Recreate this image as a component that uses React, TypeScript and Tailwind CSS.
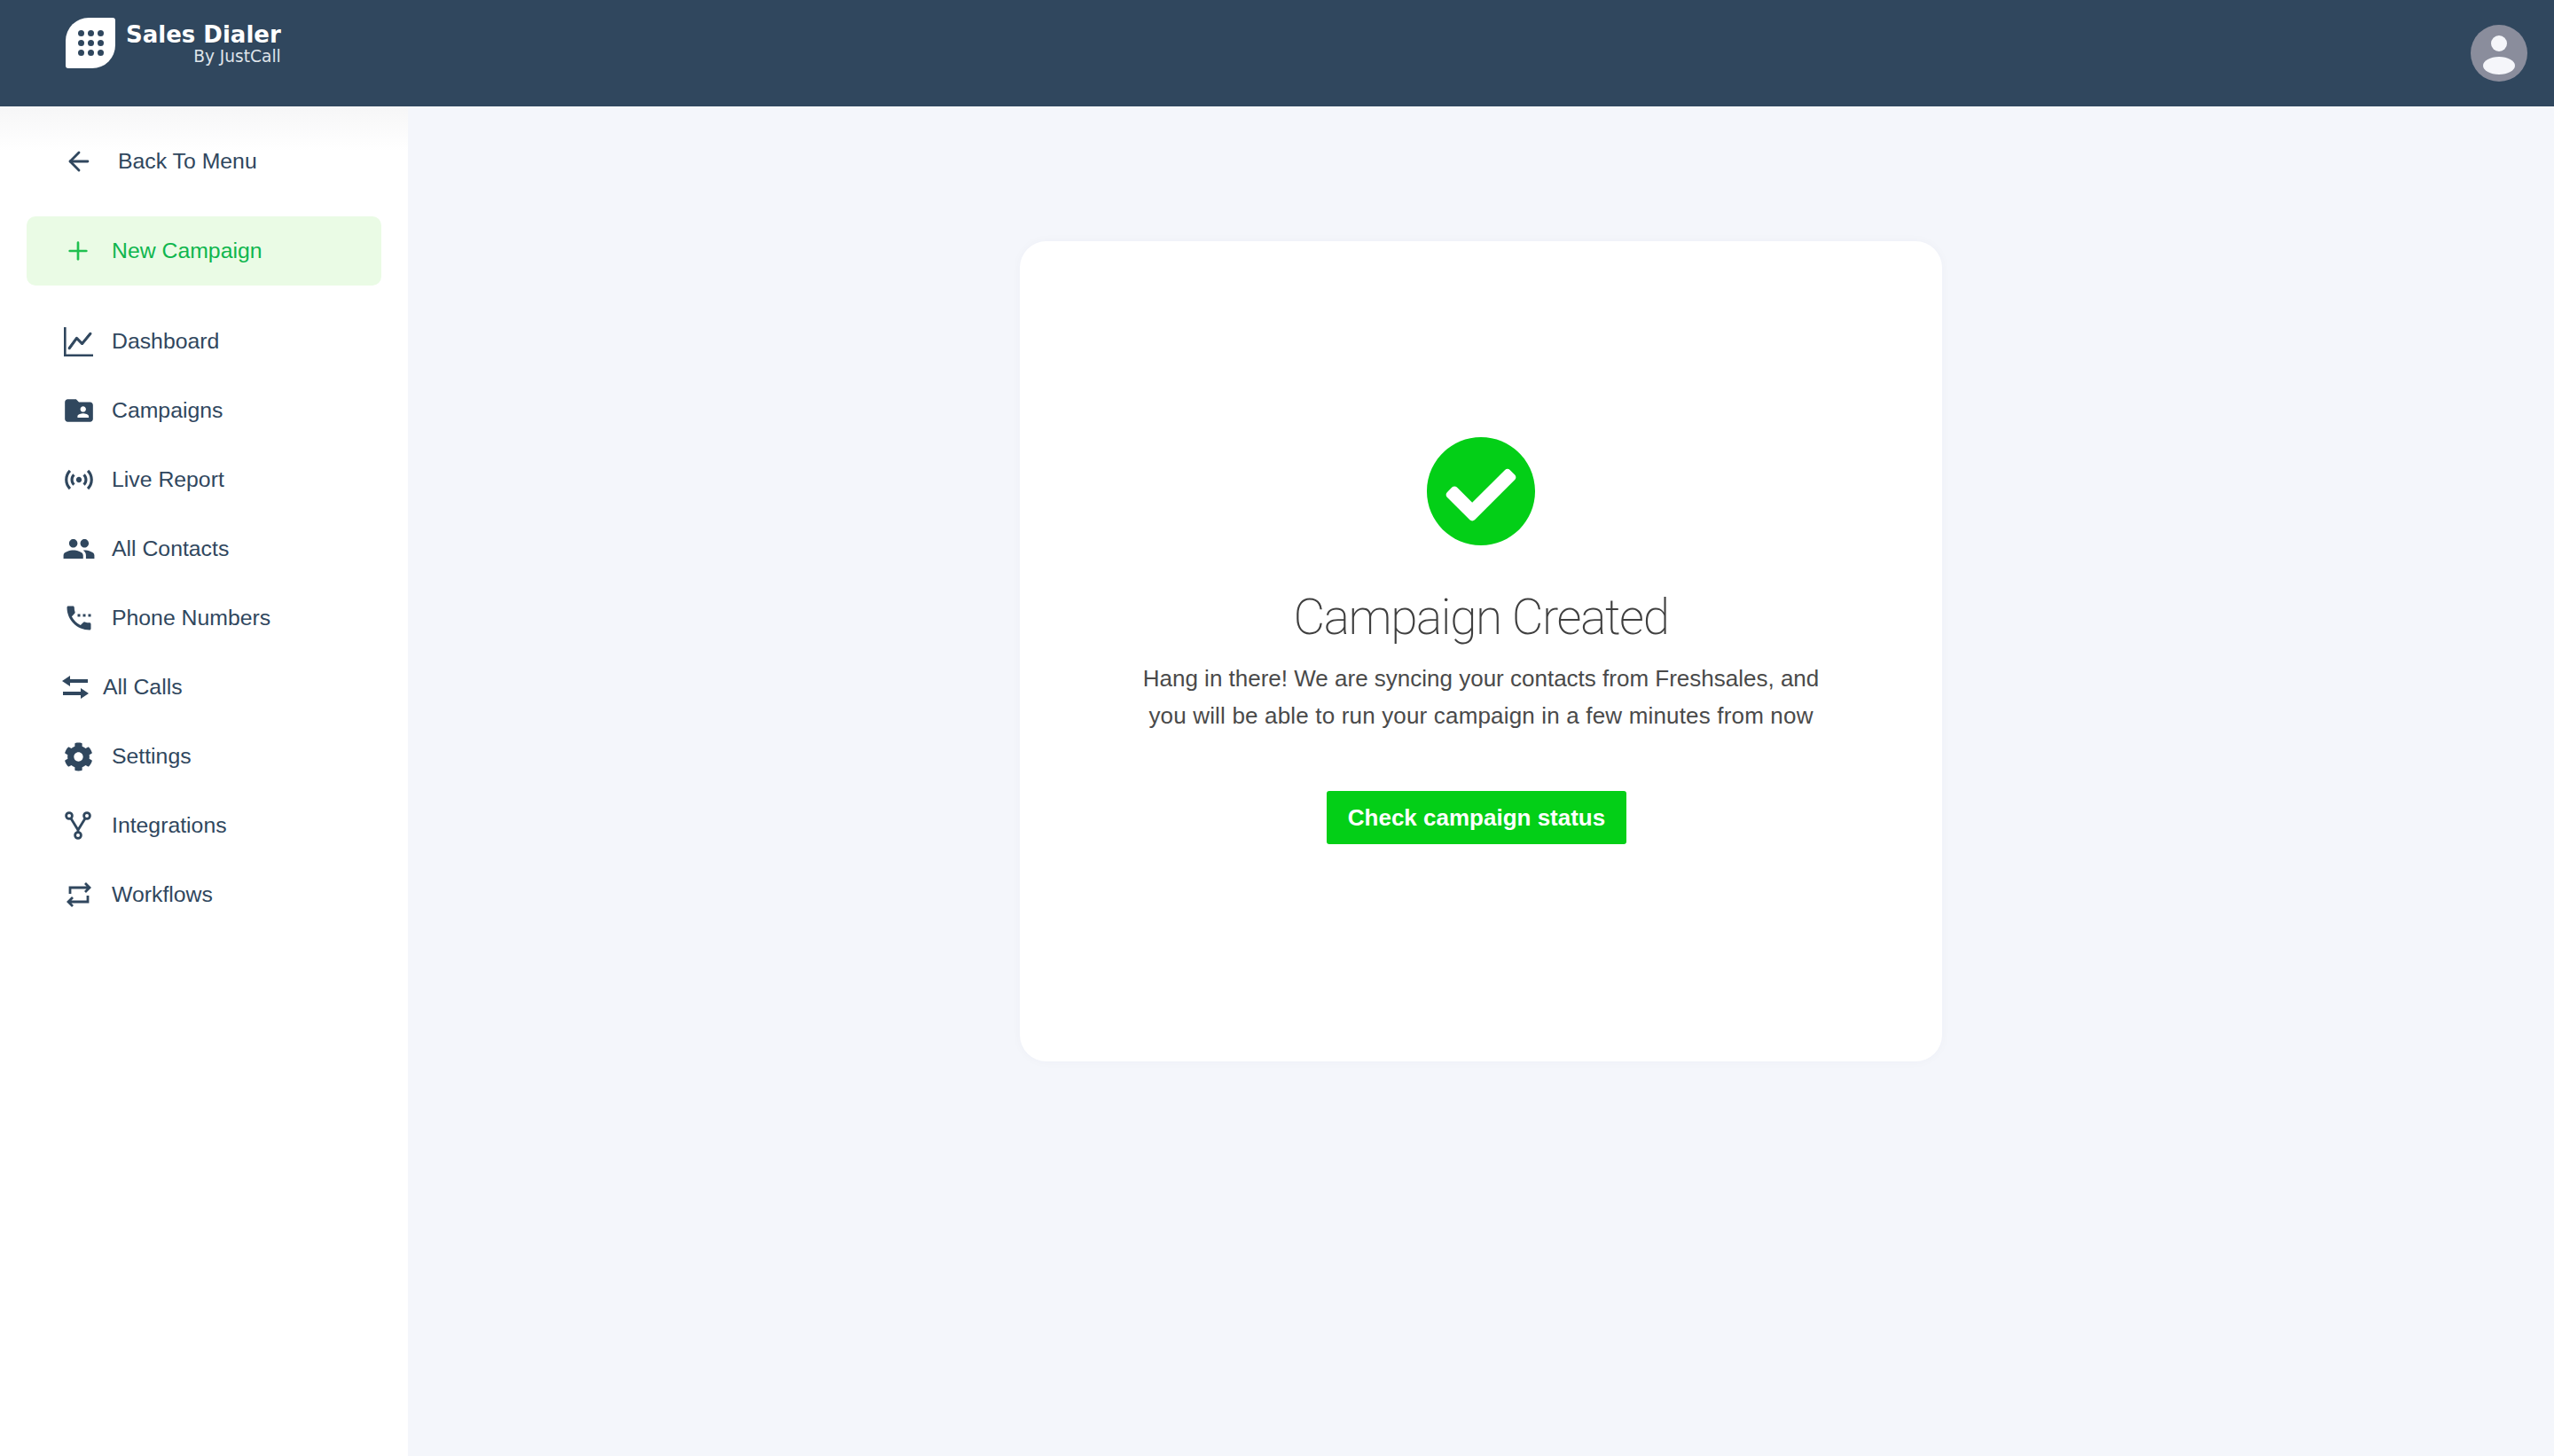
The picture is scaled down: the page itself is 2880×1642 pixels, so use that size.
import { ReactNode } from 'react';
import { ArrowLeft, Plus } from 'lucide-react';
import { BsGraphUp } from 'react-icons/bs';
import { FaCheckCircle, FaCog } from 'react-icons/fa';
import { MdFolderShared, MdPeople, MdSensors, MdSettingsPhone } from 'react-icons/md';

function AllCallsIcon() {
  return (
    <svg viewBox="0 0 30 28" className="h-[28px] w-[30px]" fill="#30475e">
      <path d="M0 7 9 1v4h20v4H9v4zM30 21l-9 6v-4H1v-4h20v-4z" />
    </svg>
  );
}

function IntegrationsIcon() {
  return (
    <svg viewBox="0 0 30 32" className="ml-[1px] h-[32px] w-[30px]" fill="none" stroke="#30475e" strokeWidth="2.8">
      <circle cx="5" cy="5" r="3.4" />
      <circle cx="25" cy="5" r="3.4" />
      <circle cx="15" cy="27" r="3.4" />
      <path d="M7 8l8 13 8-13M15 21v3" />
    </svg>
  );
}

function WorkflowsIcon() {
  return (
    <svg viewBox="0 0 28 30" className="ml-[3px] h-[30px] w-[28px]" fill="none" stroke="#30475e" strokeWidth="2.8">
      <path d="M4 14V7h22M21 2l5 5-5 5M24 16v7H2M7 18l-5 5 5 5" />
    </svg>
  );
}

function LogoMark() {
  const dots = Array.from({ length: 9 });
  return (
    <div className="flex h-[57px] w-[56px] items-center justify-center rounded-tl-[26px] rounded-br-[26px] rounded-tr-[3px] rounded-bl-[3px] bg-white">
      <div className="grid grid-cols-3 gap-x-[4px] gap-y-[4px]">
        {dots.map((_, i) => (
          <span key={i} className="h-[7px] w-[7px] rounded-full bg-[#30475e]" />
        ))}
      </div>
    </div>
  );
}

type NavItemProps = {
  icon: ReactNode;
  label: string;
  textLeft?: string;
};

function NavItem({ icon, label, textLeft = 'w-[54px]' }: NavItemProps) {
  return (
    <div className="flex h-[78px] items-center pl-[72px] text-[24.8px] text-[#30475e]">
      <div className={`flex shrink-0 items-center ${textLeft}`}>{icon}</div>
      <span>{label}</span>
    </div>
  );
}

const navItems: NavItemProps[] = [
  { icon: <BsGraphUp size={33} color="#30475e" stroke="#30475e" strokeWidth={0.5} />, label: 'Dashboard' },
  { icon: <MdFolderShared size={38} color="#30475e" className="-ml-[2px]" />, label: 'Campaigns' },
  { icon: <MdSensors size={38} color="#30475e" className="-ml-[2px]" />, label: 'Live Report' },
  { icon: <MdPeople size={38} color="#30475e" className="-ml-[2px]" />, label: 'All Contacts' },
  { icon: <MdSettingsPhone size={36} color="#30475e" className="-ml-[1px]" />, label: 'Phone Numbers' },
  { icon: <AllCallsIcon />, label: 'All Calls', textLeft: 'w-[44px] -ml-[2px] mr-[2px]' },
  { icon: <FaCog size={33} color="#30475e" />, label: 'Settings' },
  { icon: <IntegrationsIcon />, label: 'Integrations' },
  { icon: <WorkflowsIcon />, label: 'Workflows' },
];

export default function App() {
  return (
    <div className="flex h-[1642px] w-full flex-col bg-[#f4f6fb] font-['Liberation_Sans',sans-serif]">
      <header className="flex h-[120px] shrink-0 items-start justify-between bg-[#30475e] pr-[30px] pl-[74px]">
        <div className="mt-[20px] flex items-start gap-[12px]">
          <LogoMark />
          <div className="mt-[3px] flex flex-col items-end font-['DejaVu_Sans',sans-serif] text-white">
            <span className="text-[26px] leading-[32px] font-bold">Sales Dialer</span>
            <span className="-mt-[3px] text-[18.6px] leading-[24px] text-[#dfe4ea]">By JustCall</span>
          </div>
        </div>
        <div className="relative mt-[28px] h-[64px] w-[64px] overflow-hidden rounded-full bg-[#8a8d9c]">
          <span className="absolute top-[12px] left-[23px] h-[18px] w-[18px] rounded-full bg-[#f5f6fa]" />
          <span className="absolute top-[36px] left-[14px] h-[20px] w-[36px] rounded-[50%] bg-[#f5f6fa]" />
        </div>
      </header>

      <div className="flex min-h-0 flex-1">
        <aside className="w-[460px] shrink-0 bg-[linear-gradient(to_bottom,#f6f6f7,#ffffff_50px)]">
          <div className="flex h-[124px] items-center pl-[72px] text-[24.8px] text-[#30475e]">
            <ArrowLeft size={34} strokeWidth={2} className="mr-[27px]" />
            <span>Back To Menu</span>
          </div>
          <div className="mx-[30px] flex h-[78px] items-center rounded-[10px] bg-[#eafbe5] pl-[42px] text-[24.8px] text-[#0fb64e]">
            <Plus size={32} strokeWidth={2} color="#1fc04f" className="mr-[22px]" />
            <span>New Campaign</span>
          </div>
          <nav className="mt-[24px]">
            {navItems.map((item) => (
              <NavItem key={item.label} {...item} />
            ))}
          </nav>
        </aside>

        <main className="flex flex-1 items-start justify-center pt-[152px]">
          <section className="flex h-[925px] w-[1040px] flex-col items-center rounded-[30px] bg-white pt-[219px] shadow-[0_0_12px_rgba(30,50,90,0.03)]">
            <FaCheckCircle size={126} color="#03cf17" className="shrink-0" />
            <h1 className="mt-[45px] font-['Roboto',sans-serif] text-[55px] leading-[68px] font-extralight tracking-[-1.4px] text-[#3f3f3f]">
              Campaign Created
            </h1>
            <p className="mt-[14px] text-center text-[26px] leading-[42px] text-[#4a4a4a]">
              Hang in there! We are syncing your contacts from Freshsales, and
              <br />
              <span className="tracking-[0.17px]">you will be able to run your campaign in a few minutes from now</span>
            </p>
            <button className="mt-[64px] -ml-[10px] flex h-[60px] w-[338px] items-center justify-center rounded-[3px] bg-[#03cf17] text-[26px] font-bold text-white">
              Check campaign status
            </button>
          </section>
        </main>
      </div>
    </div>
  );
}
